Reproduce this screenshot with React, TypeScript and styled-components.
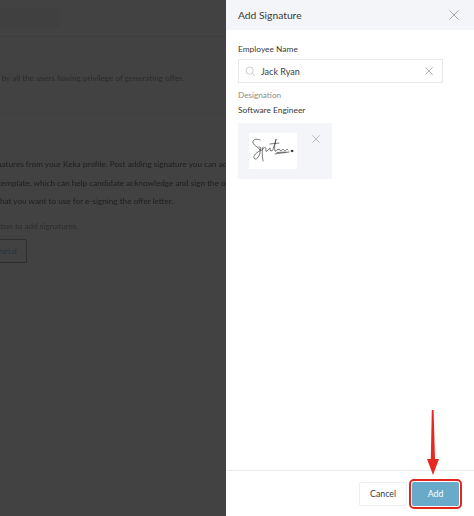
import React from 'react';
import styled, { createGlobalStyle } from 'styled-components';

const GlobalStyle = createGlobalStyle`
  html, body {
    margin: 0;
    padding: 0;
    background: #424242;
    font-family: "Lato", "Liberation Sans", sans-serif;
  }
`;

const Page = styled.div`
  position: relative;
  display: flex;
  width: 474px;
  height: 516px;
  overflow: hidden;
`;

const Backdrop = styled.div`
  width: 226px;
  height: 516px;
  flex: none;
  overflow: hidden;
  background: #424242;
  filter: blur(0.6px);
`;

const TopBar = styled.div`
  height: 37px;
  border-bottom: 1px solid #3e3e3e;
  padding-top: 8px;
  box-sizing: border-box;
`;

const TopChip = styled.div`
  width: 60px;
  height: 20px;
  background: #404040;
`;

const FirstBlock = styled.div`
  height: 77px;
  padding-top: 32px;
  box-sizing: border-box;
  border-bottom: 1px solid #3f3f3f;
`;

const SecondBlock = styled.div`
  padding-top: 41px;
  display: flex;
  flex-direction: column;
`;

const BackLine = styled.div<{ $cut: number; $muted?: boolean; $gap?: number }>`
  height: 18.6px;
  line-height: 18.6px;
  font-size: 8.2px;
  white-space: nowrap;
  color: ${(p) => (p.$muted ? '#2c2c2c' : '#1e1e1e')};
  margin-left: ${(p) => -p.$cut}px;
  margin-top: ${(p) => p.$gap ?? 0}px;
`;

const PortalButton = styled.div`
  width: 60px;
  height: 24px;
  margin: 4px 0 0 -33px;
  border: 1px solid #2e2e2e;
  border-radius: 2px;
  box-sizing: border-box;
  color: #24363f;
  font-size: 8.2px;
  line-height: 22px;
  text-align: right;
  padding-right: 9px;
`;

const Drawer = styled.aside`
  flex: 1;
  height: 516px;
  background: #ffffff;
  display: flex;
  flex-direction: column;
`;

const DrawerHeader = styled.header`
  height: 30px;
  flex: none;
  background: #f3f5f9;
  display: flex;
  align-items: center;
  justify-content: space-between;
  padding: 0 15px 0 12px;
`;

const DrawerTitle = styled.h2`
  margin: 0;
  font-size: 10.3px;
  font-weight: 400;
  color: #3a3a3a;
`;

const DrawerBody = styled.div`
  flex: 1;
  padding: 13px 12px 0;
  display: flex;
  flex-direction: column;
`;

const FieldLabel = styled.label`
  font-size: 8.4px;
  line-height: 12px;
  color: #3a3a3a;
`;

const SearchBox = styled.div`
  width: 205px;
  height: 24px;
  margin-top: 4px;
  border: 1px solid #e6e8ec;
  box-sizing: border-box;
  display: flex;
  align-items: center;
  padding: 0 9px 0 6px;
  gap: 5px;
`;

const SearchValue = styled.span`
  flex: 1;
  font-size: 9px;
  color: #3c3c3c;
`;

const MutedLabel = styled.div`
  margin-top: 5px;
  font-size: 8.2px;
  line-height: 14px;
  color: #8c8c8c;
`;

const Designation = styled.div`
  margin-top: 1px;
  font-size: 8.4px;
  line-height: 14px;
  color: #3a3a3a;
`;

const SignatureCard = styled.div`
  width: 94px;
  height: 56px;
  margin-top: 6px;
  background: #f3f5f9;
  display: flex;
  align-items: flex-start;
  padding: 10px 0 0 11px;
  box-sizing: border-box;
  gap: 15px;
`;

const SignatureThumb = styled.div`
  width: 48px;
  height: 36px;
  background: #ffffff;
  display: flex;
  align-items: center;
  justify-content: center;
`;

const CardClose = styled.span`
  display: flex;
  margin-top: 2px;
`;

const DrawerFooter = styled.footer`
  height: 46px;
  flex: none;
  box-sizing: border-box;
  border-top: 1px solid #e9ebef;
  display: flex;
  align-items: center;
  justify-content: flex-end;
  gap: 5px;
  padding: 0 15px 0 0;
`;

const CancelButton = styled.button`
  width: 48px;
  height: 24px;
  padding: 0;
  background: #ffffff;
  border: 1px solid #eceef1;
  border-radius: 2px;
  font: inherit;
  font-size: 8.8px;
  color: #3a3a3a;
`;

const AddButton = styled.button`
  width: 47px;
  height: 24px;
  padding: 0;
  background: #69a9c9;
  border: none;
  border-radius: 2px;
  font: inherit;
  font-size: 8.8px;
  color: #ffffff;
  outline: 2px solid #e0261d;
  outline-offset: 1px;
`;

const ArrowMark = styled.svg`
  position: absolute;
  left: 427px;
  top: 410px;
`;

const CloseIcon = ({ size, color }: { size: number; color: string }) => (
  <svg width={size} height={size} viewBox="0 0 10 10" fill="none" stroke={color} strokeWidth={size > 9 ? 0.8 : 0.9}>
    <path d="M0.5 0.5 9.5 9.5M9.5 0.5 0.5 9.5" />
  </svg>
);

const SearchIcon = () => (
  <svg width="11" height="11" viewBox="0 0 11 11" fill="none" stroke="#c4c7cc" strokeWidth="0.9">
    <circle cx="4.6" cy="4.6" r="3.6" />
    <path d="M7.3 7.3 10 10" />
  </svg>
);

const SignatureScribble = () => (
  <svg width="44" height="26" viewBox="0 0 44 26" fill="none" stroke="#222" strokeWidth="0.6" strokeLinecap="round">
    <path d="M9 2C5 0 1 2 2 5c1 3 6 4 7 7 1 4-3 10-5 9-3-1 0-7 7-9" />
    <path d="M8 9c1 0 2 0 2 2 0 1-2 1-1 0M12 9c-1 2-1 8 0 14M12 11c1-2 3-2 3 0s-1 3 1 2 2-3 3-3-1 3 1 3 2-2 3-5c1-3 2-5 2-7-1 4-2 9-1 12 1 1 2-2 3-2" />
    <path d="M19 6c3 0 6-1 9-1" />
    <path d="M27 12c1-1 2-1 2 0s1 1 2 0 1-1 2 0 1 1 2 0 1-1 2 0" />
    <path d="M24 16c4-1 9-1 14-2M26 14.5c3 0 6-.5 9-.5" />
    <circle cx="41" cy="13" r="0.9" fill="#222" />
  </svg>
);

const App: React.FC = () => {
  return (
    <>
      <GlobalStyle />
      <Page>
        <Backdrop>
          <TopBar>
            <TopChip />
          </TopBar>
          <FirstBlock>
            <BackLine $cut={4} $muted>
              s by all the users having privilege of generating offer.
            </BackLine>
          </FirstBlock>
          <SecondBlock>
            <BackLine $cut={3}>natures from your Keka profile. Post adding signature you can add</BackLine>
            <BackLine $cut={2}>template, which can help candidate acknowledge and sign the offer</BackLine>
            <BackLine $cut={3}>that you want to use for e-signing the offer letter.</BackLine>
            <BackLine $cut={2} $muted $gap={6}>
              tton to add signatures.
            </BackLine>
            <PortalButton>Portal</PortalButton>
          </SecondBlock>
        </Backdrop>
        <Drawer>
          <DrawerHeader>
            <DrawerTitle>Add Signature</DrawerTitle>
            <CloseIcon size={10} color="#8f9297" />
          </DrawerHeader>
          <DrawerBody>
            <FieldLabel>Employee Name</FieldLabel>
            <SearchBox>
              <SearchIcon />
              <SearchValue>Jack Ryan</SearchValue>
              <CloseIcon size={8} color="#8f9297" />
            </SearchBox>
            <MutedLabel>Designation</MutedLabel>
            <Designation>Software Engineer</Designation>
            <SignatureCard>
              <SignatureThumb>
                <SignatureScribble />
              </SignatureThumb>
              <CardClose>
                <CloseIcon size={8} color="#a2a5aa" />
              </CardClose>
            </SignatureCard>
          </DrawerBody>
          <DrawerFooter>
            <CancelButton>Cancel</CancelButton>
            <AddButton>Add</AddButton>
          </DrawerFooter>
        </Drawer>
        <ArrowMark width="12" height="65" viewBox="0 0 12 65">
          <path d="M4.8 0h1.8L8 49H12L6 65 0 49h3.8z" fill="#e6281f" />
        </ArrowMark>
      </Page>
    </>
  );
};

export default App;
